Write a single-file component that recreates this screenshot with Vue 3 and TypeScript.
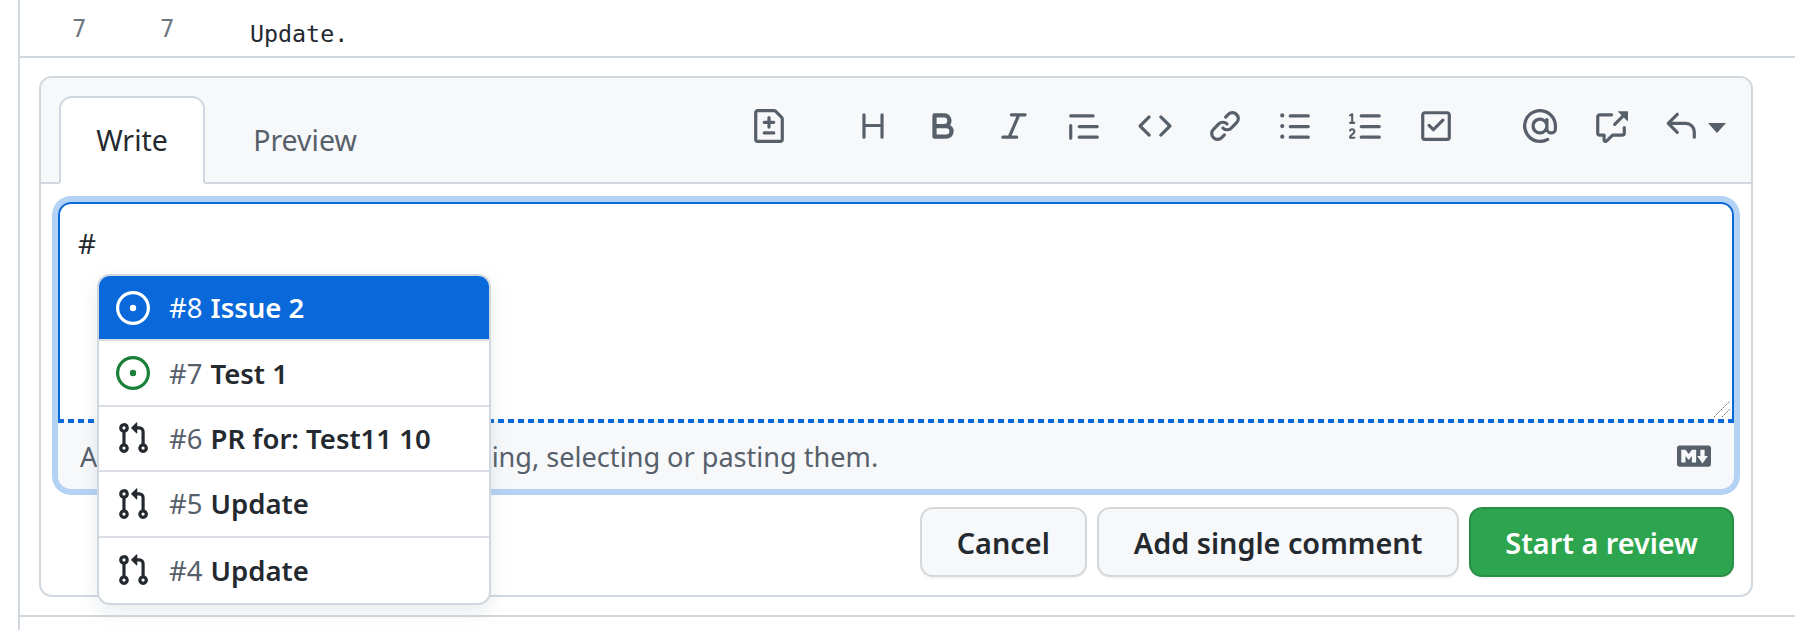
<script setup lang="ts">
interface Suggestion {
  num: number
  title: string
  kind: 'issue' | 'pr'
  selected?: boolean
}

const icons: Record<string, string> = {
  fileDiff:
    'M1 1.75C1 .784 1.784 0 2.75 0h7.586c.464 0 .909.184 1.237.513l2.914 2.914c.329.328.513.773.513 1.237v9.586A1.75 1.75 0 0 1 13.25 16H2.75A1.75 1.75 0 0 1 1 14.25Zm1.75-.25a.25.25 0 0 0-.25.25v12.5c0 .138.112.25.25.25h10.5a.25.25 0 0 0 .25-.25V4.664a.25.25 0 0 0-.073-.177l-2.914-2.914a.25.25 0 0 0-.177-.073ZM8 3.25a.75.75 0 0 1 .75.75v1.5h1.5a.75.75 0 0 1 0 1.5h-1.5v1.5a.75.75 0 0 1-1.5 0V7h-1.5a.75.75 0 0 1 0-1.5h1.5V4A.75.75 0 0 1 8 3.25Zm-3 8a.75.75 0 0 1 .75-.75h4.5a.75.75 0 0 1 0 1.5h-4.5a.75.75 0 0 1-.75-.75Z',
  heading:
    'M3.75 2a.75.75 0 0 1 .75.75V7h7V2.75a.75.75 0 0 1 1.5 0v10.5a.75.75 0 0 1-1.5 0V8.5h-7v4.75a.75.75 0 0 1-1.5 0V2.75A.75.75 0 0 1 3.75 2Z',
  bold: 'M4 2h4.5a3.501 3.501 0 0 1 2.852 5.53A3.499 3.499 0 0 1 9.5 14H4a1 1 0 0 1-1-1V3a1 1 0 0 1 1-1Zm1 7v3h4.5a1.5 1.5 0 0 0 0-3Zm3.5-2a1.5 1.5 0 0 0 0-3H5v3Z',
  italic:
    'M6 2.75A.75.75 0 0 1 6.75 2h6.5a.75.75 0 0 1 0 1.5h-2.505l-3.858 9H9.25a.75.75 0 0 1 0 1.5h-6.5a.75.75 0 0 1 0-1.5h2.505l3.858-9H6.75A.75.75 0 0 1 6 2.75Z',
  quote:
    'M1.75 2.5h10.5a.75.75 0 0 1 0 1.5H1.75a.75.75 0 0 1 0-1.5Zm4 5h8.5a.75.75 0 0 1 0 1.5h-8.5a.75.75 0 0 1 0-1.5Zm0 5h8.5a.75.75 0 0 1 0 1.5h-8.5a.75.75 0 0 1 0-1.5ZM2.5 7.75v6a.75.75 0 0 1-1.5 0v-6a.75.75 0 0 1 1.5 0Z',
  code: 'm11.28 3.22 4.25 4.25a.75.75 0 0 1 0 1.06l-4.25 4.25a.749.749 0 0 1-1.275-.326.749.749 0 0 1 .215-.734L13.94 8l-3.72-3.72a.749.749 0 0 1 .326-1.275.749.749 0 0 1 .734.215Zm-6.56 0a.751.751 0 0 1 1.042.018.751.751 0 0 1 .018 1.042L2.06 8l3.72 3.72a.749.749 0 0 1-.326 1.275.749.749 0 0 1-.734-.215L.47 8.53a.75.75 0 0 1 0-1.06Z',
  link: 'm7.775 3.275 1.25-1.25a3.5 3.5 0 1 1 4.95 4.95l-2.5 2.5a3.5 3.5 0 0 1-4.95 0 .751.751 0 0 1 .018-1.042.751.751 0 0 1 1.042-.018 1.998 1.998 0 0 0 2.83 0l2.5-2.5a2.002 2.002 0 0 0-2.83-2.83l-1.25 1.25a.751.751 0 0 1-1.042-.018.751.751 0 0 1-.018-1.042Zm-4.69 9.64a1.998 1.998 0 0 0 2.83 0l1.25-1.25a.751.751 0 0 1 1.042.018.751.751 0 0 1 .018 1.042l-1.25 1.25a3.5 3.5 0 1 1-4.95-4.95l2.5-2.5a3.5 3.5 0 0 1 4.95 0 .751.751 0 0 1-.018 1.042.751.751 0 0 1-1.042.018 1.998 1.998 0 0 0-2.83 0l-2.5 2.5a1.998 1.998 0 0 0 0 2.83Z',
  listUl:
    'M5.75 2.5h8.5a.75.75 0 0 1 0 1.5h-8.5a.75.75 0 0 1 0-1.5Zm0 5h8.5a.75.75 0 0 1 0 1.5h-8.5a.75.75 0 0 1 0-1.5Zm0 5h8.5a.75.75 0 0 1 0 1.5h-8.5a.75.75 0 0 1 0-1.5ZM2 14a1 1 0 1 1 0-2 1 1 0 0 1 0 2Zm1-6a1 1 0 1 1-2 0 1 1 0 0 1 2 0ZM2 4a1 1 0 1 1 0-2 1 1 0 0 1 0 2Z',
  listOl:
    'M5 3.25a.75.75 0 0 1 .75-.75h8.5a.75.75 0 0 1 0 1.5h-8.5A.75.75 0 0 1 5 3.25Zm0 5a.75.75 0 0 1 .75-.75h8.5a.75.75 0 0 1 0 1.5h-8.5A.75.75 0 0 1 5 8.25Zm0 5a.75.75 0 0 1 .75-.75h8.5a.75.75 0 0 1 0 1.5h-8.5a.75.75 0 0 1-.75-.75ZM.924 10.32a.5.5 0 0 1-.851-.525l.001-.001.001-.002.002-.004.007-.011c.097-.144.215-.273.348-.384.228-.19.588-.392 1.068-.392.468 0 .858.181 1.126.484.259.294.377.673.377 1.038 0 .987-.686 1.495-1.156 1.845l-.047.035c-.303.225-.522.4-.654.597h1.357a.5.5 0 0 1 0 1H.5a.5.5 0 0 1-.5-.5c0-1.005.692-1.52 1.167-1.875l.035-.025c.531-.396.8-.625.8-1.078a.57.57 0 0 0-.128-.376C1.806 10.068 1.695 10 1.5 10a.658.658 0 0 0-.429.163.835.835 0 0 0-.144.153ZM2.003 2.5V6h.503a.5.5 0 0 1 0 1H.5a.5.5 0 0 1 0-1h.503V3.308l-.28.14a.5.5 0 0 1-.446-.895l1.003-.5a.5.5 0 0 1 .723.447Z',
  checkbox:
    'M2.75 1h10.5c.966 0 1.75.784 1.75 1.75v10.5A1.75 1.75 0 0 1 13.25 15H2.75A1.75 1.75 0 0 1 1 13.25V2.75C1 1.784 1.784 1 2.75 1Zm0 1.5a.25.25 0 0 0-.25.25v10.5c0 .138.112.25.25.25h10.5a.25.25 0 0 0 .25-.25V2.75a.25.25 0 0 0-.25-.25Zm9.03 3.28-4.5 4.5a.75.75 0 0 1-1.06 0l-2-2a.75.75 0 1 1 1.06-1.06l1.47 1.47 3.97-3.97a.75.75 0 1 1 1.06 1.06Z',
  mention:
    'M4.75 2.37a6.501 6.501 0 0 0 6.5 11.26.75.75 0 0 1 .75 1.298A7.999 7.999 0 0 1 .989 4.148 8 8 0 0 1 16 7.75v1.5a2.75 2.75 0 0 1-5.072 1.475A3.999 3.999 0 0 1 4 8a4 4 0 0 1 6.5-3.11.75.75 0 0 1 1.5.11v4.25a1.25 1.25 0 0 0 2.5 0v-1.5a6.5 6.5 0 0 0-9.75-5.38ZM10.5 8a2.5 2.5 0 1 0-5 0 2.5 2.5 0 0 0 5 0Z',
  crossRef:
    'M2.75 3.5a.25.25 0 0 0-.25.25v7.5c0 .138.112.25.25.25h2a.75.75 0 0 1 .75.75v2.19l2.72-2.72a.749.749 0 0 1 .53-.22h4.5a.25.25 0 0 0 .25-.25v-2.5a.75.75 0 0 1 1.5 0v2.5A1.75 1.75 0 0 1 13.25 13H9.06l-2.573 2.573A1.458 1.458 0 0 1 4 14.543V13H2.75A1.75 1.75 0 0 1 1 11.25v-7.5C1 2.784 1.784 2 2.75 2h5.5a.75.75 0 0 1 0 1.5ZM16 1.25v4.146a.25.25 0 0 1-.427.177L14.03 4.03l-3.75 3.75a.749.749 0 0 1-1.275-.326.749.749 0 0 1 .215-.734l3.75-3.75-1.543-1.543A.25.25 0 0 1 11.604 1h4.146a.25.25 0 0 1 .25.25Z',
  reply:
    'M6.78 1.97a.75.75 0 0 1 0 1.06L3.81 6h6.44A4.75 4.75 0 0 1 15 10.75v2.5a.75.75 0 0 1-1.5 0v-2.5a3.25 3.25 0 0 0-3.25-3.25H3.81l2.97 2.97a.749.749 0 0 1-.326 1.275.749.749 0 0 1-.734-.215L1.47 7.28a.75.75 0 0 1 0-1.06l4.25-4.25a.75.75 0 0 1 1.06 0Z',
  issue:
    'M8 9.5a1.5 1.5 0 1 0 0-3 1.5 1.5 0 0 0 0 3ZM8 0a8 8 0 1 1 0 16A8 8 0 0 1 8 0ZM1.5 8a6.5 6.5 0 1 0 13 0 6.5 6.5 0 0 0-13 0Z',
  pr: 'M1.5 3.25a2.25 2.25 0 1 1 3 2.122v5.256a2.251 2.251 0 1 1-1.5 0V5.372A2.25 2.25 0 0 1 1.5 3.25Zm5.677-.177L9.573.677A.25.25 0 0 1 10 .854V2.5h1A2.5 2.5 0 0 1 13.5 5v5.628a2.251 2.251 0 1 1-1.5 0V5a1 1 0 0 0-1-1h-1v1.646a.25.25 0 0 1-.427.177L7.177 3.427a.25.25 0 0 1 0-.354ZM3.75 2.5a.75.75 0 1 0 0 1.5.75.75 0 0 0 0-1.5Zm0 9.5a.75.75 0 1 0 0 1.5.75.75 0 0 0 0-1.5Zm8.25.75a.75.75 0 1 0 1.5 0 .75.75 0 0 0-1.5 0Z',
  markdown:
    'M14.85 3c.63 0 1.15.52 1.14 1.15v7.7c0 .63-.51 1.15-1.15 1.15H1.15C.52 13 0 12.48 0 11.84V4.15C0 3.52.52 3 1.15 3ZM9 11V5H7L5.5 7 4 5H2v6h2V8l1.5 1.92L7 8v3Zm2.99.5L14.5 8H13V5h-2v3H9.5Z',
}

const toolbar: string[][] = [
  ['fileDiff'],
  ['heading', 'bold', 'italic', 'quote', 'code', 'link', 'listUl', 'listOl', 'checkbox'],
  ['mention', 'crossRef', 'reply'],
]

const suggestions: Suggestion[] = [
  { num: 8, title: 'Issue 2', kind: 'issue', selected: true },
  { num: 7, title: 'Test 1', kind: 'issue' },
  { num: 6, title: 'PR for: Test11 10', kind: 'pr' },
  { num: 5, title: 'Update', kind: 'pr' },
  { num: 4, title: 'Update', kind: 'pr' },
]
</script>

<template>
  <div class="page">
    <div class="diff-row">
      <span class="line-num">7</span>
      <span class="line-num">7</span>
      <span class="line-code">Update.</span>
    </div>

    <div class="thread">
      <form class="editor">
        <div class="editor-head">
          <div class="tabs">
            <button type="button" class="tab active">Write</button>
            <button type="button" class="tab">Preview</button>
          </div>
          <div class="toolbar">
            <div v-for="(group, i) in toolbar" :key="i" class="tool-group">
              <svg
                v-for="name in group"
                :key="name"
                class="icon"
                viewBox="0 0 16 16"
                fill="currentColor"
              >
                <path :d="icons[name]" />
              </svg>
            </div>
            <span class="caret"></span>
          </div>
        </div>

        <div class="editor-body">
          <div class="write-box">
            <textarea class="input" value="#"></textarea>
            <svg class="grip" viewBox="0 0 18 18">
              <path d="M0 16 16 0M8 16l8-8" />
            </svg>
            <div class="dashes"></div>
            <div class="attach">
              <span>Attach files by dragging &amp; dropping, selecting or pasting them.</span>
              <svg class="icon" viewBox="0 0 16 16" fill="currentColor">
                <path :d="icons.markdown" />
              </svg>
            </div>
          </div>

          <div class="actions">
            <button type="button" class="btn">Cancel</button>
            <button type="button" class="btn">Add single comment</button>
            <button type="button" class="btn primary">Start a review</button>
          </div>
        </div>

        <ul class="suggester">
          <li
            v-for="item in suggestions"
            :key="item.num"
            class="suggestion"
            :class="{ selected: item.selected }"
          >
            <svg class="icon" :class="item.kind" viewBox="0 0 16 16" fill="currentColor">
              <path :d="icons[item.kind]" />
            </svg>
            <span class="num">#{{ item.num }}</span>
            <span class="title">{{ item.title }}</span>
          </li>
        </ul>
      </form>
    </div>
  </div>
</template>

<style>
html,
body {
  background: #fff;
  overflow: hidden;
}
</style>

<style scoped>
.page {
  margin-left: 18px;
  border-left: 2px solid #d0d7de;
  min-height: 630px;
  box-sizing: border-box;
  font-family: 'Noto Sans', sans-serif;
  color: #24292f;
}

.diff-row {
  display: flex;
  height: 56px;
  border-bottom: 2px solid #d0d7de;
}

.line-num {
  width: 88px;
  padding-top: 12px;
  padding-left: 52px;
  margin-right: -52px;
  font-family: 'DejaVu Sans Mono', monospace;
  font-size: 24px;
  line-height: 34px;
  color: #6e7781;
}

.line-code {
  margin-left: 54px;
  padding-top: 17px;
  font-family: 'DejaVu Sans Mono', monospace;
  font-size: 23.3px;
  line-height: 34px;
}

.thread {
  padding: 18px 42px 18px 19px;
  border-bottom: 2px solid #d0d7de;
}

.editor {
  position: relative;
  border: 2px solid #d0d7de;
  border-radius: 13px;
}

.editor-head {
  display: flex;
  height: 86px;
  padding: 18px 25px 0 18px;
  background: #f6f8fa;
  border-bottom: 2px solid #d0d7de;
  border-radius: 11px 11px 0 0;
}

.tabs {
  display: flex;
  gap: 12px;
}

.tab {
  height: 88px;
  width: 146px;
  padding: 0;
  background: none;
  border: 2px solid transparent;
  border-radius: 13px 13px 0 0;
  font-family: inherit;
  font-size: 28.5px;
  color: #57606a;
}

.tab + .tab {
  width: 176px;
}

.tab.active {
  background: #fff;
  border-color: #d0d7de;
  border-bottom-color: #fff;
  color: #24292f;
}

.toolbar {
  display: flex;
  align-items: center;
  height: 34px;
  margin: 13px 0 0 auto;
  color: #57606a;
}

.tool-group {
  display: flex;
  gap: 36.4px;
  margin-left: 70px;
}

.icon {
  display: block;
  width: 34px;
  height: 34px;
  flex: none;
}

.caret {
  margin: 4px 0 0 10px;
  border-top: 10px solid #57606a;
  border-left: 9px solid transparent;
  border-right: 9px solid transparent;
}

.editor-body {
  padding: 18px 17px 18px 17px;
}

.write-box {
  position: relative;
  border-radius: 13px;
  box-shadow: 0 0 0 6px #b4d2f4;
  background: #f6f8fa;
}

.input {
  display: block;
  width: 100%;
  height: 217px;
  box-sizing: border-box;
  padding: 17px 18px 0;
  background: #fff;
  border: 2px solid #0969da;
  border-bottom: none;
  border-radius: 13px 13px 0 0;
  outline: none;
  resize: none;
  font-family: inherit;
  font-size: 28px;
  line-height: 45px;
  color: #24292f;
}

.grip {
  position: absolute;
  right: 2px;
  top: 199px;
  width: 18px;
  height: 18px;
  fill: none;
  stroke: #666;
  stroke-width: 1;
  stroke-dasharray: 1.5 1;
}

.dashes {
  height: 4px;
  background: repeating-linear-gradient(90deg, #0969da 0 6px, transparent 6px 10px);
}

.attach {
  display: flex;
  align-items: center;
  justify-content: space-between;
  height: 66px;
  padding: 0 23px 0 22px;
  font-size: 27.1px;
  color: #57606a;
}

.actions {
  display: flex;
  justify-content: flex-end;
  gap: 10px;
  margin-top: 18px;
}

.btn {
  height: 70px;
  padding: 0 35px;
  background: #f6f8fa;
  border: 2px solid #d5d8da;
  border-radius: 13px;
  box-shadow: 0 2px 0 rgba(27, 31, 36, 0.04);
  font-family: inherit;
  font-size: 28.8px;
  font-weight: 600;
  color: #24292f;
}

.btn.primary {
  padding: 0 34px;
  background: #2da44e;
  border-color: #298e46;
  color: #fff;
}

.suggester {
  position: absolute;
  left: 56px;
  top: 196px;
  width: 394px;
  margin: 0;
  padding: 0;
  box-sizing: border-box;
  list-style: none;
  background: #fff;
  border: 2px solid #d0d7de;
  border-radius: 13px;
  overflow: hidden;
  box-shadow: 0 6px 18px rgba(140, 149, 159, 0.2);
}

.suggestion {
  display: flex;
  align-items: center;
  height: 65.4px;
  box-sizing: border-box;
  padding-left: 17px;
  border-bottom: 2px solid #d8dee4;
  font-size: 27.5px;
}

.suggestion:last-child {
  border-bottom: none;
}

.suggestion .icon {
  margin-right: 19px;
}

.suggestion .issue {
  color: #1a7f37;
}

.suggestion .pr {
  color: #24292f;
}

.num {
  margin-right: 8px;
  color: #57606a;
  font-weight: 400;
}

.title {
  font-weight: 600;
}

.suggestion.selected {
  background: #0969da;
  color: #fff;
}

.suggestion.selected .icon,
.suggestion.selected .num {
  color: #fff;
}
</style>
